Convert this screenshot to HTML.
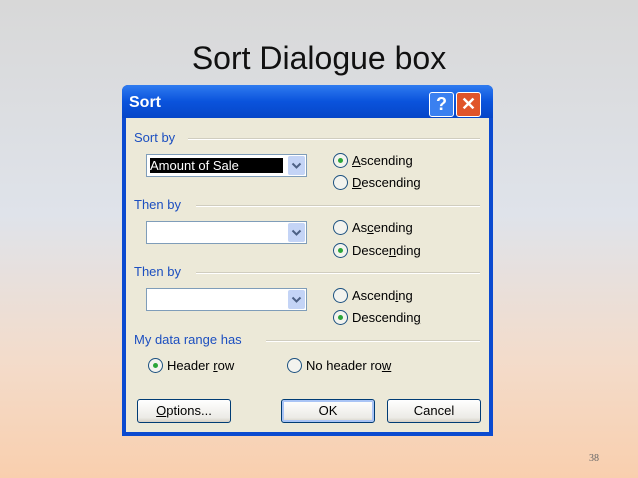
<!DOCTYPE html>
<html><head><style>
body{margin:0;width:638px;height:478px;overflow:hidden;background:linear-gradient(#d8d8d8 0%,#dfe3ea 45%,#f3dccb 75%,#f9cfae 100%);font-family:"Liberation Sans",sans-serif;position:relative}
.t{position:absolute;left:0;width:638px;top:40px;text-align:center;font-size:32px;color:#111;font-family:"Liberation Sans",sans-serif}
.dlg{position:absolute;left:122px;top:85px;width:371px;height:351px;background:#0b4ad0;border-radius:6px 6px 0 0}
.title{position:absolute;left:0;top:0;width:371px;height:33px;background:linear-gradient(#2f7bf0,#0a53dc 50%,#0646c8);border-radius:6px 6px 0 0}
.title span{position:absolute;left:7px;top:9px;color:#fff;font-weight:bold;font-size:16px}
.btnq,.btnx{position:absolute;top:7px;width:23px;height:23px;border:1px solid #fff;border-radius:3px;color:#fff;font-weight:bold;font-size:18px;text-align:center;line-height:23px}
.btnq{left:307px;background:#3a80f0}
.btnx{left:334px;background:#e0542a}
.body{position:absolute;left:4px;top:33px;width:363px;height:314px;background:#ece9d8;font-size:13px;color:#000}
.lab{position:absolute;color:#1c4fc0;font-size:13px}
.line{position:absolute;height:1px;background:#d0cdbf;border-bottom:1px solid #fff}
.combo{position:absolute;width:159px;height:21px;background:#fff;border:1px solid #7f9db9}
.combo .dd{position:absolute;right:1px;top:1px;width:17px;height:19px;background:#c4d4f6;border-radius:2px}
.combo .sel{position:absolute;left:3px;top:3px;width:133px;height:15px;background:#000;color:#fff;font-size:13px;line-height:15px}
.r{position:absolute;font-size:13px;line-height:15px}
.r i{position:absolute;left:0;top:0;width:13px;height:13px;border:1px solid #1c5180;border-radius:50%;background:#f3f3ee}
.r i.on:after{content:"";position:absolute;left:4px;top:4px;width:5px;height:5px;border-radius:50%;background:#2aa538}
.r span{position:absolute;left:19px;top:0;white-space:nowrap}
.b{position:absolute;top:281px;height:22px;width:92px;border:1px solid #003c74;border-radius:3px;background:linear-gradient(#fff,#ecebe6 80%,#d6d0c5);text-align:center;line-height:22px;font-size:13px}
</style></head><body>
<div class="t">Sort Dialogue box</div>
<div class="dlg">
<div class="title"><span>Sort</span><div class="btnq">?</div><div class="btnx">✕</div></div>
<div class="body">
<div class="lab" style="left:8px;top:12px">Sort by</div><div class="line" style="left:62px;width:292px;top:20px"></div>
<div class="combo" style="left:20px;top:36px"><div class="sel">Amount of Sale</div><div class="dd"><svg width="17" height="19"><path d="M4.5 7.5L8.5 11.5L12.5 7.5" stroke="#4d6185" stroke-width="2" fill="none"/></svg></div></div>
<div class="r" style="left:207px;top:35px"><i class="on"></i><span><u>A</u>scending</span></div>
<div class="r" style="left:207px;top:57px"><i></i><span><u>D</u>escending</span></div>
<div class="lab" style="left:8px;top:79px">Then by</div><div class="line" style="left:70px;width:284px;top:87px"></div>
<div class="combo" style="left:20px;top:103px"><div class="dd"><svg width="17" height="19"><path d="M4.5 7.5L8.5 11.5L12.5 7.5" stroke="#4d6185" stroke-width="2" fill="none"/></svg></div></div>
<div class="r" style="left:207px;top:102px"><i></i><span>As<u>c</u>ending</span></div>
<div class="r" style="left:207px;top:125px"><i class="on"></i><span>Desce<u>n</u>ding</span></div>
<div class="lab" style="left:8px;top:146px">Then by</div><div class="line" style="left:70px;width:284px;top:154px"></div>
<div class="combo" style="left:20px;top:170px"><div class="dd"><svg width="17" height="19"><path d="M4.5 7.5L8.5 11.5L12.5 7.5" stroke="#4d6185" stroke-width="2" fill="none"/></svg></div></div>
<div class="r" style="left:207px;top:170px"><i></i><span>Ascend<u>i</u>ng</span></div>
<div class="r" style="left:207px;top:192px"><i class="on"></i><span>Descendin<u>g</u></span></div>
<div class="lab" style="left:8px;top:214px">My data range has</div><div class="line" style="left:140px;width:214px;top:222px"></div>
<div class="r" style="left:22px;top:240px"><i class="on"></i><span>Header <u>r</u>ow</span></div>
<div class="r" style="left:161px;top:240px"><i></i><span>No header ro<u>w</u></span></div>
<div class="b" style="left:11px"><u>O</u>ptions...</div>
<div class="b" style="left:155px;box-shadow:inset 0 0 0 2px #a9c4f5">OK</div>
<div class="b" style="left:261px">Cancel</div>
</div></div>
<div style="position:absolute;left:589px;top:453px;font-size:10px;color:#666;font-family:'Liberation Serif',serif">38</div>
</body></html>
